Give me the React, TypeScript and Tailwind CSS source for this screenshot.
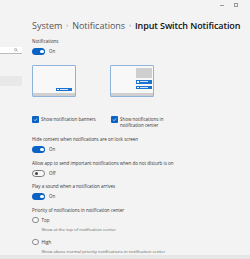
import React from 'react';

function Toggle({ on }: { on: boolean }) {
  return (
    <div className="flex items-center gap-[4px] h-[7px]">
      {on ? (
        <div className="w-[13px] h-[6.5px] rounded-full bg-[#0a62c4] flex items-center justify-end pr-[1.5px]">
          <div className="w-[3.5px] h-[3.5px] rounded-full bg-white" />
        </div>
      ) : (
        <div className="w-[13px] h-[6.5px] rounded-full border-[0.7px] border-[#777] bg-[#f7f7f7] flex items-center pl-[1.5px]">
          <div className="w-[3px] h-[3px] rounded-full bg-[#444]" />
        </div>
      )}
      <span className="text-[4.5px] text-[#333]">{on ? 'On' : 'Off'}</span>
    </div>
  );
}

function Check() {
  return (
    <div className="w-[7px] h-[7px] rounded-[1px] bg-[#0a62c4] flex items-center justify-center shrink-0">
      <svg width="5" height="5" viewBox="0 0 10 10">
        <path d="M2 5.2 L4.2 7.4 L8.2 2.8" stroke="white" strokeWidth="1.4" fill="none" />
      </svg>
    </div>
  );
}

function Radio({ label, desc }: { label: string; desc: string }) {
  return (
    <div className="flex flex-col">
      <div className="flex items-center gap-[3px] h-[8px]">
        <div className="w-[6.5px] h-[6.5px] rounded-full border-[0.7px] border-[#888] bg-[#f9f9f9]" />
        <span className="text-[4.5px] text-[#333]">{label}</span>
      </div>
      <div className="pl-[9.5px] mt-[2px] h-[6px] leading-[6px] text-[4.3px] text-[#666]">{desc}</div>
    </div>
  );
}

function Label({ children }: { children: React.ReactNode }) {
  return <div className="h-[6px] leading-[6px] text-[4.5px] text-[#333]">{children}</div>;
}

export default function App() {
  return (
    <div
      className="w-[250px] h-[259px] bg-[#f3f3f3] flex flex-col overflow-hidden"
      style={{ fontFamily: '"Open Sans", "Noto Sans", sans-serif' }}
    >
      <div className="h-[10px] flex justify-end items-center gap-[10px] pr-[12px] text-[#aaa]">
        <div className="w-[4px] h-[0.6px] bg-[#999]" />
        <div className="w-[4px] h-[4px] border-[0.6px] border-[#999]" />
      </div>

      <div className="flex flex-1">
        <aside className="w-[22px] shrink-0 flex flex-col">
          <div className="mt-[37px] h-[7px] bg-white border-b-[0.5px] border-[#bbb] flex items-center justify-end pr-[4px]">
            <svg width="4" height="4" viewBox="0 0 10 10">
              <circle cx="4" cy="4" r="2.8" stroke="#666" strokeWidth="1.2" fill="none" />
              <path d="M6 6 L9 9" stroke="#666" strokeWidth="1.2" />
            </svg>
          </div>
          <div className="mt-[22px] h-[10px] bg-[#e8e8e8] rounded-r-[2px]" />
        </aside>

        <main className="flex-1 pl-[10px] flex flex-col">
          <div className="mt-[9px] h-[13px] flex items-center gap-[3px] whitespace-nowrap">
            <span className="text-[9px] text-[#555]">System</span>
            <span className="text-[6px] text-[#777] px-[1px]">›</span>
            <span className="text-[9px] text-[#555]">Notifications</span>
            <span className="text-[6px] text-[#777] px-[1px]">›</span>
            <span className="text-[9px] font-semibold text-[#111] tracking-[-0.1px]">Input Switch Notification</span>
          </div>

          <div className="mt-[6px]">
            <Label>Notifications</Label>
          </div>
          <div className="mt-[4px]">
            <Toggle on />
          </div>

          <div className="mt-[10px] flex gap-[34px]">
            <div className="w-[44px] h-[32px] border-[0.8px] border-[#8fb4dc] rounded-[1px] bg-[#f8f8f8] flex flex-col">
              <div className="flex-1 flex items-end justify-end pr-[3px] pb-[2px]">
                <div className="w-[16px] h-[3.5px] bg-[#1a73d0] flex items-center pl-[1px] gap-[1px]">
                  <div className="w-[1.5px] h-[1.5px] bg-white" />
                  <div className="w-[8px] h-[0.8px] bg-[#cfe3fa]" />
                </div>
              </div>
              <div className="h-[3px] bg-[#cfcfcf]" />
            </div>
            <div className="w-[44px] h-[32px] border-[0.8px] border-[#8fb4dc] rounded-[1px] bg-[#f8f8f8] flex flex-col">
              <div className="flex-1 flex justify-end pr-[1px] pt-[2px]">
                <div className="w-[16px] flex flex-col gap-[2px]">
                  <div className="h-[10px] bg-[#cfcfcf]" />
                  <div className="h-[3.5px] bg-[#1a73d0] flex items-center pl-[1px] gap-[1px]">
                    <div className="w-[1.5px] h-[1.5px] bg-white" />
                    <div className="w-[8px] h-[0.8px] bg-[#cfe3fa]" />
                  </div>
                  <div className="h-[3.5px] bg-[#1a73d0] flex items-center pl-[1px] gap-[1px]">
                    <div className="w-[1.5px] h-[1.5px] bg-white" />
                    <div className="w-[8px] h-[0.8px] bg-[#cfe3fa]" />
                  </div>
                </div>
              </div>
              <div className="h-[3px] bg-[#cfcfcf]" />
            </div>
          </div>

          <div className="mt-[19px] flex">
            <div className="w-[79px] flex items-start gap-[2px]">
              <Check />
              <span className="text-[4.5px] leading-[6px] text-[#333]">Show notification banners</span>
            </div>
            <div className="flex items-start gap-[2px]">
              <Check />
              <span className="text-[4.5px] leading-[6px] text-[#333]">
                Show notifications in
                <br />
                notification center
              </span>
            </div>
          </div>

          <div className="mt-[8px]">
            <Label>Hide content when notifications are on lock screen</Label>
          </div>
          <div className="mt-[4px]">
            <Toggle on />
          </div>

          <div className="mt-[7px]">
            <Label>Allow app to send important notifications when do not disturb is on</Label>
          </div>
          <div className="mt-[4px]">
            <Toggle on={false} />
          </div>

          <div className="mt-[6px]">
            <Label>Play a sound when a notification arrives</Label>
          </div>
          <div className="mt-[4px]">
            <Toggle on />
          </div>

          <div className="mt-[7px]">
            <Label>Priority of notifications in notification center</Label>
          </div>
          <div className="mt-[3px]">
            <Radio label="Top" desc="Show at the top of notification center" />
          </div>
          <div className="mt-[6px]">
            <Radio label="High" desc="Show above normal priority notifications in notification center" />
          </div>
        </main>
      </div>
      <div className="h-[4px] bg-[#e6e6e6] shrink-0" />
    </div>
  );
}
